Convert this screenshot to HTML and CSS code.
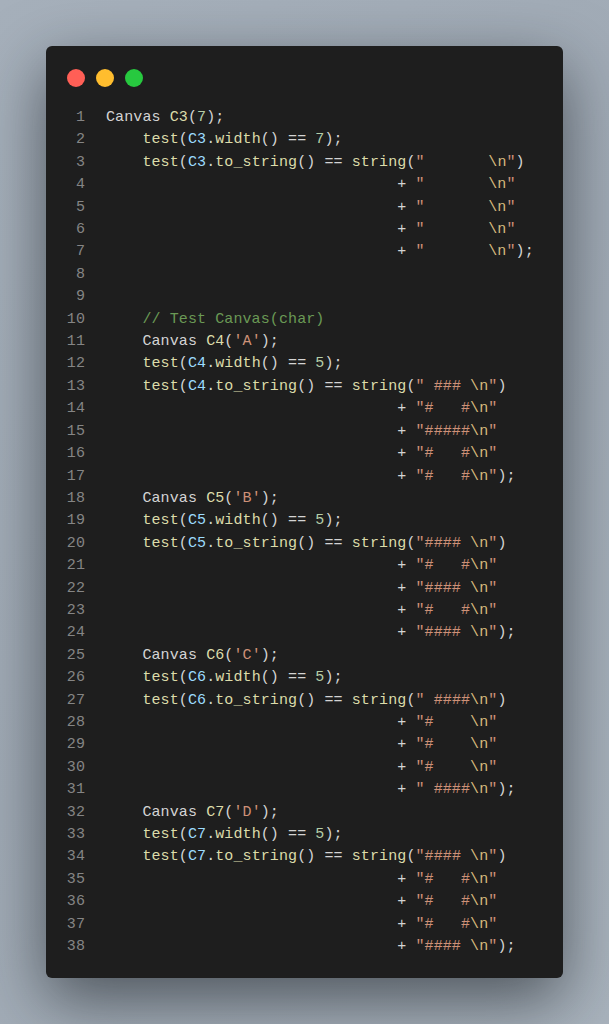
FILE: index.html
```html
<!DOCTYPE html>
<html>
<head>
<meta charset="utf-8">
<link rel="stylesheet" href="styles.css">
</head>
<body>
<div class="card">
  <div class="dots"><span class="dot red"></span><span class="dot yellow"></span><span class="dot green"></span></div>
  <div class="code">
<span class="ln">1</span><span class="tx">Canvas <span class="f">C3</span>(<span class="n">7</span>);</span>
<span class="ln">2</span><span class="tx">    <span class="f">test</span>(<span class="v">C3</span>.<span class="f">width</span>() == <span class="n">7</span>);</span>
<span class="ln">3</span><span class="tx">    <span class="f">test</span>(<span class="v">C3</span>.<span class="f">to_string</span>() == <span class="f">string</span>(<span class="s">"       </span><span class="e">\n</span><span class="s">"</span>)</span>
<span class="ln">4</span><span class="tx">                                + <span class="s">"       </span><span class="e">\n</span><span class="s">"</span></span>
<span class="ln">5</span><span class="tx">                                + <span class="s">"       </span><span class="e">\n</span><span class="s">"</span></span>
<span class="ln">6</span><span class="tx">                                + <span class="s">"       </span><span class="e">\n</span><span class="s">"</span></span>
<span class="ln">7</span><span class="tx">                                + <span class="s">"       </span><span class="e">\n</span><span class="s">"</span>);</span>
<span class="ln">8</span><span class="tx"> </span>
<span class="ln">9</span><span class="tx"> </span>
<span class="ln">10</span><span class="tx">    <span class="c">// Test Canvas(char)</span></span>
<span class="ln">11</span><span class="tx">    Canvas <span class="f">C4</span>(<span class="s">'A'</span>);</span>
<span class="ln">12</span><span class="tx">    <span class="f">test</span>(<span class="v">C4</span>.<span class="f">width</span>() == <span class="n">5</span>);</span>
<span class="ln">13</span><span class="tx">    <span class="f">test</span>(<span class="v">C4</span>.<span class="f">to_string</span>() == <span class="f">string</span>(<span class="s">" ### </span><span class="e">\n</span><span class="s">"</span>)</span>
<span class="ln">14</span><span class="tx">                                + <span class="s">"#   #</span><span class="e">\n</span><span class="s">"</span></span>
<span class="ln">15</span><span class="tx">                                + <span class="s">"#####</span><span class="e">\n</span><span class="s">"</span></span>
<span class="ln">16</span><span class="tx">                                + <span class="s">"#   #</span><span class="e">\n</span><span class="s">"</span></span>
<span class="ln">17</span><span class="tx">                                + <span class="s">"#   #</span><span class="e">\n</span><span class="s">"</span>);</span>
<span class="ln">18</span><span class="tx">    Canvas <span class="f">C5</span>(<span class="s">'B'</span>);</span>
<span class="ln">19</span><span class="tx">    <span class="f">test</span>(<span class="v">C5</span>.<span class="f">width</span>() == <span class="n">5</span>);</span>
<span class="ln">20</span><span class="tx">    <span class="f">test</span>(<span class="v">C5</span>.<span class="f">to_string</span>() == <span class="f">string</span>(<span class="s">"#### </span><span class="e">\n</span><span class="s">"</span>)</span>
<span class="ln">21</span><span class="tx">                                + <span class="s">"#   #</span><span class="e">\n</span><span class="s">"</span></span>
<span class="ln">22</span><span class="tx">                                + <span class="s">"#### </span><span class="e">\n</span><span class="s">"</span></span>
<span class="ln">23</span><span class="tx">                                + <span class="s">"#   #</span><span class="e">\n</span><span class="s">"</span></span>
<span class="ln">24</span><span class="tx">                                + <span class="s">"#### </span><span class="e">\n</span><span class="s">"</span>);</span>
<span class="ln">25</span><span class="tx">    Canvas <span class="f">C6</span>(<span class="s">'C'</span>);</span>
<span class="ln">26</span><span class="tx">    <span class="f">test</span>(<span class="v">C6</span>.<span class="f">width</span>() == <span class="n">5</span>);</span>
<span class="ln">27</span><span class="tx">    <span class="f">test</span>(<span class="v">C6</span>.<span class="f">to_string</span>() == <span class="f">string</span>(<span class="s">" ####</span><span class="e">\n</span><span class="s">"</span>)</span>
<span class="ln">28</span><span class="tx">                                + <span class="s">"#    </span><span class="e">\n</span><span class="s">"</span></span>
<span class="ln">29</span><span class="tx">                                + <span class="s">"#    </span><span class="e">\n</span><span class="s">"</span></span>
<span class="ln">30</span><span class="tx">                                + <span class="s">"#    </span><span class="e">\n</span><span class="s">"</span></span>
<span class="ln">31</span><span class="tx">                                + <span class="s">" ####</span><span class="e">\n</span><span class="s">"</span>);</span>
<span class="ln">32</span><span class="tx">    Canvas <span class="f">C7</span>(<span class="s">'D'</span>);</span>
<span class="ln">33</span><span class="tx">    <span class="f">test</span>(<span class="v">C7</span>.<span class="f">width</span>() == <span class="n">5</span>);</span>
<span class="ln">34</span><span class="tx">    <span class="f">test</span>(<span class="v">C7</span>.<span class="f">to_string</span>() == <span class="f">string</span>(<span class="s">"#### </span><span class="e">\n</span><span class="s">"</span>)</span>
<span class="ln">35</span><span class="tx">                                + <span class="s">"#   #</span><span class="e">\n</span><span class="s">"</span></span>
<span class="ln">36</span><span class="tx">                                + <span class="s">"#   #</span><span class="e">\n</span><span class="s">"</span></span>
<span class="ln">37</span><span class="tx">                                + <span class="s">"#   #</span><span class="e">\n</span><span class="s">"</span></span>
<span class="ln">38</span><span class="tx">                                + <span class="s">"#### </span><span class="e">\n</span><span class="s">"</span>);</span>
  </div>
</div>
</body>
</html>
```
FILE: styles.css
```css
html, body {
  margin: 0;
  padding: 0;
}
body {
  width: 609px;
  height: 1024px;
  box-sizing: border-box;
  padding: 46px;
  background: linear-gradient(135deg, #a6b0bb 0%, #a0aab5 50%, #a9b3bd 100%);
  overflow: hidden;
}
.card {
  width: 517px;
  height: 932px;
  box-sizing: border-box;
  background: #1e1e1e;
  border-radius: 6px;
  box-shadow: 0 22px 64px rgba(20, 25, 30, 0.6);
  padding: 23px 0 0 0;
}
.dots {
  display: flex;
  gap: 11px;
  padding-left: 21px;
  height: 18px;
}
.dot {
  width: 18px;
  height: 18px;
  border-radius: 50%;
  display: block;
}
.red { background: #ff5f56; }
.yellow { background: #ffbd2e; }
.green { background: #27c93f; }
.code {
  display: grid;
  grid-template-columns: 39px auto;
  column-gap: 21px;
  margin-top: 20px;
  font-family: "Liberation Mono", "DejaVu Sans Mono", monospace;
  font-size: 15px;
  letter-spacing: 0.1px;
  line-height: 22.4px;
  color: #d4d4d4;
}
.ln {
  text-align: right;
  color: #858585;
}
.tx {
  white-space: pre;
}
.f { color: #dcdcaa; }
.v { color: #9cdcfe; }
.n { color: #b5cea8; }
.s { color: #ce9178; }
.e { color: #d7ba7d; }
.c { color: #6a9955; }
```
